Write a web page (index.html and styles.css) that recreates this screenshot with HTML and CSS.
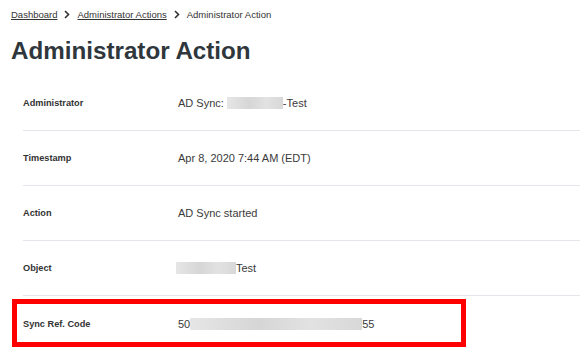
FILE: index.html
```html
<!DOCTYPE html>
<html>
<head>
  <link rel="stylesheet" href="styles.css">
  <title>Administrator Action</title>
</head>
<body>
  <div class="page">
    <div class="breadcrumb">
      <a class="crumb" href="#">Dashboard</a>
      <svg class="chevron" width="6" height="9" viewBox="0 0 6 9"><path d="M1 1l3.5 3.5L1 8" fill="none" stroke="#333" stroke-width="1.6"/></svg>
      <a class="crumb" href="#">Administrator Actions</a>
      <svg class="chevron" width="6" height="9" viewBox="0 0 6 9"><path d="M1 1l3.5 3.5L1 8" fill="none" stroke="#333" stroke-width="1.6"/></svg>
      <span class="current">Administrator Action</span>
    </div>
    <h1 class="title">Administrator Action</h1>
  </div>

  <div class="details">
    <div class="row">
      <div class="label">Administrator</div>
      <div class="value">AD Sync:<span class="redacted gap" style="width: 56px"></span>-Test</div>
    </div>
    <div class="row">
      <div class="label">Timestamp</div>
      <div class="value">Apr 8, 2020 7:44 AM (EDT)</div>
    </div>
    <div class="row">
      <div class="label">Action</div>
      <div class="value">AD Sync started</div>
    </div>
    <div class="row">
      <div class="label">Object</div>
      <div class="value value-tight"><span class="redacted" style="width: 60px"></span>Test</div>
    </div>
    <div class="row last">
      <div class="label">Sync Ref. Code</div>
      <div class="value">50<span class="redacted" style="width: 172px"></span>55</div>
      <div class="highlight"></div>
    </div>
  </div>
</body>
</html>
```

FILE: styles.css
```css
body {
  margin: 0;
  font-family: "Liberation Sans", Arial, sans-serif;
  color: #333;
  background: #fff;
}
.page {
  padding: 0 11px;
}
.breadcrumb {
  display: flex;
  align-items: center;
  gap: 6px;
  padding-top: 9px;
  font-size: 9.5px;
  line-height: 11px;
}
.crumb {
  color: #333;
  text-decoration: underline;
}
.current {
  color: #333;
}
.chevron {
  display: block;
  margin: 0 1px;
}
.title {
  margin: 17px 0 0;
  font-size: 24.2px;
  line-height: 28px;
  font-weight: bold;
  color: #2f373d;
}
.details {
  margin: 11px 0 0 23px;
}
.row {
  position: relative;
  display: flex;
  align-items: center;
  height: 55px;
  box-sizing: border-box;
  border-bottom: 1px solid #e3e7eb;
}
.row.last {
  border-bottom: none;
}
.label {
  width: 155px;
  flex-shrink: 0;
  font-size: 9.2px;
  font-weight: bold;
  color: #333;
}
.value {
  display: flex;
  align-items: center;
  font-size: 11px;
  color: #3a3a3a;
}
.value-tight {
  margin-left: -2px;
}
.redacted {
  display: inline-block;
  height: 12px;
  background: linear-gradient(90deg, #e6e6e6, #d6d6d6 40%, #e2e2e2 70%, #d8d8d8);
  filter: blur(0.6px);
}
.redacted.gap {
  margin-left: 3px;
}
.highlight {
  position: absolute;
  left: -11px;
  top: 3px;
  width: 454px;
  height: 48px;
  box-sizing: border-box;
  border: 5px solid #ff0000;
}
```
